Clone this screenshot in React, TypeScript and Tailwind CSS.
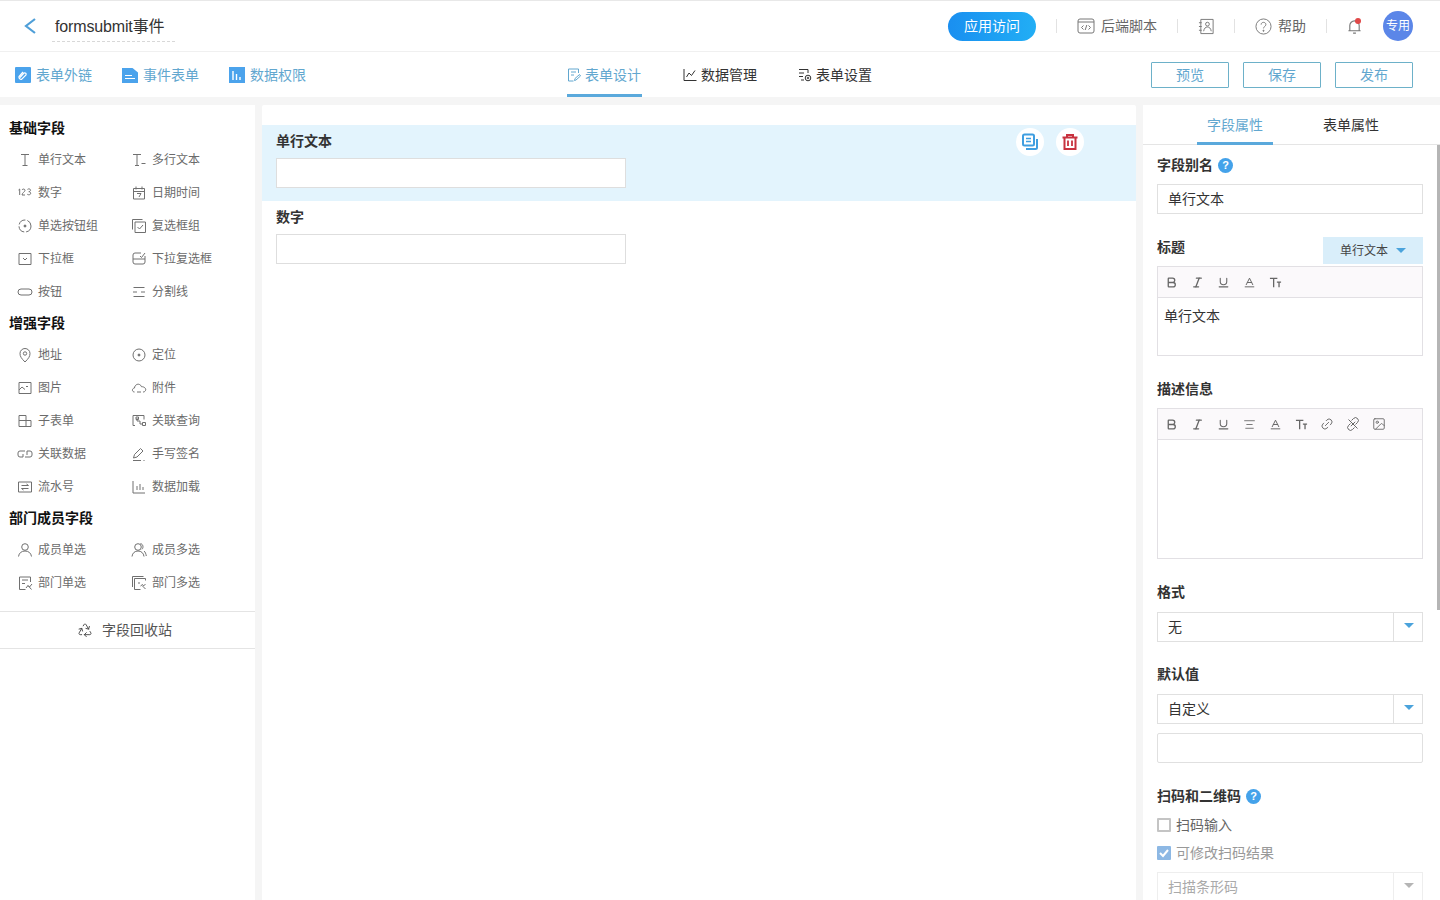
import React from "react";
import { Bold, Italic, Underline, AlignCenter, Baseline, Link2, Image as ImageIcon, Recycle } from "lucide-react";

const glyphs: Record<string, React.ReactNode> = {
  text: <path d="M4 2.500h8M8 2.500v11M5.500 13.500h5" />,
  textarea: <path d="M2 2.500h8M6 2.500v11M4 13.500h4M10.500 11.500h4" />,
  number: (
    <>
      <path d="M1.500 5l1.200-1v6" />
      <path d="M5 5c.5-1.400 3-1.200 3 .3 0 1.400-3 2.700-3 4.700h3" />
      <path d="M10.500 4.400c1-.9 3-.6 3 .8 0 1-1 1.400-1.700 1.500.9 0 1.900.5 1.900 1.600 0 1.500-2.200 1.900-3.400 1" />
    </>
  ),
  date: <path d="M2.500 3.500h11v10.500h-11zM2.500 6.500h11M5 1.500v3M11 1.500v3M6 8.500h4L8 12" />,
  radio: (
    <>
      <circle cx="8" cy="8" r="6" strokeDasharray="8 2" />
      <circle cx="8" cy="8" r="1" fill="currentColor" />
    </>
  ),
  checkbox: <path d="M1.500 11.500v-10h10M4 4h10.500v10.500H4zM6.500 9l2 2 3.500-4" />,
  select: <path d="M2 2.500h12v11H2zM6 7l2 2 2-2" />,
  multiselect: <path d="M14 5v3H2V4a2 2 0 0 1 2-2h6M2 8v3a2 2 0 0 0 2 2h8a2 2 0 0 0 2-2V8M9 5l1.500 1.500L14 2" />,
  button: <rect x="1" y="5" width="14" height="6" rx="3" />,
  divider: <path d="M2.500 3.500h11M2 8h4M10 8h4M2.500 12.500h11" />,
  address: (
    <>
      <path d="M8 15C4.500 11.500 3 9.500 3 6.500a5 5 0 0 1 10 0c0 3-1.500 5-5 8.500z" />
      <circle cx="8" cy="6.500" r="1.700" />
    </>
  ),
  locate: (
    <>
      <circle cx="8" cy="8" r="6" />
      <circle cx="8" cy="8" r="1" fill="currentColor" />
    </>
  ),
  picture: <path d="M2 2.500h12v11H2zM2 10l3-3 3 2.500M9 6.500h2" />,
  attachment: <path d="M3.500 12C1 12 .5 8.500 3.500 8c.2-2.800 2.800-4.500 5-3.500 1 .4 1.700 1.200 2 2.200C13 6.500 15.500 8.500 14.500 10.500c-.4.900-1.200 1.500-2.500 1.500M6 12h4" />,
  subform: <path d="M2 2.500h7v11H2zM9 7.500h5v6H9M2 7.500h7" />,
  query: <path d="M2 12.500v-10h11v4M2 12.500h2M6 5v3h3v3h2.500M11.500 9.500h3v3h-3zM5 4h2.500v2.500H5z" />,
  relation: <path d="M8 5H3a2 2 0 0 0-2 2v2a2 2 0 0 0 2 2h3V8M8 11h5a2 2 0 0 0 2-2V7a2 2 0 0 0-2-2h-3v4" />,
  signature: <path d="M2.500 12l1-3.500 6-6 2.500 2.500-6 6zM2 14.500h8M12.500 14.500h1" />,
  serial: <path d="M1.500 3h13v10h-13zM4.500 6.500h7M9.500 5l2 1.500M4.500 9.500h7M4.500 9.500l2 1.500" />,
  chart: <path d="M2 2v12h12M6 11V7M9 11V5M12 11V8" />,
  user: (
    <>
      <circle cx="8" cy="5" r="3.300" />
      <path d="M1.500 14.500c.5-3.500 3-5.500 6.500-5.500s6 2 6.500 5.500" />
    </>
  ),
  users: (
    <>
      <circle cx="7" cy="5" r="3.300" />
      <path d="M1 14.500c.4-3.500 2.800-5.500 6-5.500s5.600 2 6 5.500M9.500 1.500c2.500.5 3.300 4 1.500 5.800M13 9c1.300 1 2 3 2.300 5" />
    </>
  ),
  dept: <path d="M13.500 7V2H2.500v12.500h6M5 5h6M5 8.500h3M9 13l2-2.500 1.500 1.500L15 9M11 10.500l3.500 4" />,
  depts: <path d="M1.500 12V1.500h11M3.500 3.500h11v2M3.500 3.500v11h6M7 8h2M9.500 11l2-1.500 1 1.500 2-2M11.500 11l3 3" />,
};

function FieldIcon({ name }: { name: string }) {
  return (
    <svg viewBox="0 0 16 16" className="w-4 h-4 shrink-0 text-[#707070]" fill="none" stroke="currentColor" strokeWidth="1">
      {glyphs[name]}
    </svg>
  );
}

const sections = [
  {
    title: "基础字段",
    items: [
      ["text", "单行文本"],
      ["textarea", "多行文本"],
      ["number", "数字"],
      ["date", "日期时间"],
      ["radio", "单选按钮组"],
      ["checkbox", "复选框组"],
      ["select", "下拉框"],
      ["multiselect", "下拉复选框"],
      ["button", "按钮"],
      ["divider", "分割线"],
    ],
  },
  {
    title: "增强字段",
    items: [
      ["address", "地址"],
      ["locate", "定位"],
      ["picture", "图片"],
      ["attachment", "附件"],
      ["subform", "子表单"],
      ["query", "关联查询"],
      ["relation", "关联数据"],
      ["signature", "手写签名"],
      ["serial", "流水号"],
      ["chart", "数据加载"],
    ],
  },
  {
    title: "部门成员字段",
    items: [
      ["user", "成员单选"],
      ["users", "成员多选"],
      ["dept", "部门单选"],
      ["depts", "部门多选"],
    ],
  },
];

function Sidebar() {
  return (
    <aside className="w-[255px] shrink-0 bg-white pt-[13px]">
      {sections.map((s) => (
        <div key={s.title} className="mb-[5px]">
          <h3 className="h-5 leading-5 pl-[9px] mb-[5px] text-sm font-bold text-[#111]">{s.title}</h3>
          <div className="grid grid-cols-[114px_114px] pl-[17px]">
            {s.items.map(([icon, label]) => (
              <div key={label} className="h-[33px] flex items-center gap-[5px] text-xs text-[#6b6b6b]">
                <FieldIcon name={icon} />
                <span>{label}</span>
              </div>
            ))}
          </div>
        </div>
      ))}
      <div className="mt-3 h-[38px] pr-[6px] border-y border-[#e4e4e4] flex items-center justify-center gap-[9px] text-sm text-[#555]">
        <Recycle className="w-4 h-4 text-[#444]" strokeWidth={1.4} />
        <span>字段回收站</span>
      </div>
    </aside>
  );
}

function CanvasField({ label, active }: { label: string; active?: boolean }) {
  return (
    <div className={`relative h-[76px] pt-2 px-[14px] ${active ? "bg-[#e3f4fd]" : ""}`}>
      <div className="h-[17px] leading-[17px] text-sm font-bold text-[#333]">{label}</div>
      <div className="mt-2 w-[350px] h-[30px] bg-white border border-[#dedede]" />
      {active && (
        <div className="absolute top-[3px] left-[754px] flex gap-3">
          <span className="w-7 h-7 rounded-full bg-white flex items-center justify-center">
            <svg viewBox="0 0 18 18" className="w-[18px] h-[18px]" fill="none" stroke="#3f9ee0" strokeWidth="2">
              <rect x="2" y="1.500" width="11" height="11" rx="1.500" />
              <path d="M5 5.500h5M5 8.500h5" strokeWidth="1.500" />
              <path d="M16 6v8.500a1.500 1.500 0 0 1-1.500 1.500H5" />
            </svg>
          </span>
          <span className="w-7 h-7 rounded-full bg-white flex items-center justify-center">
            <svg viewBox="0 0 18 18" className="w-[18px] h-[18px]" fill="none" stroke="#c8323f" strokeWidth="2">
              <path d="M1.500 4.500h15M6 4.500V2h6v2.500M3.500 4.500V16h11V4.500" />
              <path d="M7 7.500v5.500M11 7.500v5.500" strokeWidth="1.800" />
            </svg>
          </span>
        </div>
      )}
    </div>
  );
}

function HelpDot() {
  return (
    <span className="w-[15px] h-[15px] rounded-full bg-[#44a2ea] text-white text-[11px] font-bold leading-[15px] text-center">?</span>
  );
}

function Caret({ color = "border-t-[#4ba3dc]" }: { color?: string }) {
  return <span className={`w-0 h-0 border-x-[5px] border-x-transparent border-t-[5px] ${color}`} />;
}

function Select({ value, disabled }: { value: string; disabled?: boolean }) {
  return (
    <div className={`h-[30px] flex border text-sm ${disabled ? "border-[#eeeeee] text-[#aaa]" : "border-[#e0e0e0] text-[#333]"}`}>
      <div className="flex-1 pl-[10px] leading-[28px]">{value}</div>
      <div className={`w-[29px] pl-px pb-[3px] border-l flex items-center justify-center ${disabled ? "border-[#eeeeee]" : "border-[#e0e0e0]"}`}>
        <Caret color={disabled ? "border-t-[#b5b5b5]" : "border-t-[#4ba3dc]"} />
      </div>
    </div>
  );
}

function TextSizeIcon() {
  return (
    <svg viewBox="0 0 14 14" className="w-[13px] h-[13px]" fill="none" stroke="currentColor" strokeWidth="1.400">
      <path d="M1 2.500h8M5 2.500V12M8.500 6.500h4.500M10.800 6.500V12" />
    </svg>
  );
}

function UnlinkIcon() {
  return (
    <svg viewBox="0 0 14 14" className="w-[14px] h-[14px]" fill="none" stroke="currentColor" strokeWidth="1">
      <path d="M5.500 3.500l2-2a2.800 2.800 0 0 1 4 4l-2 2M8.500 10.500l-2 2a2.800 2.800 0 0 1-4-4l2-2M4.800 9.200l4.400-4.400M2.500 2.500l9 9" />
    </svg>
  );
}

function Editor({ tools, height, children }: { tools: React.ReactNode[]; height: string; children?: React.ReactNode }) {
  return (
    <div className={`border border-[#e2e0e4] ${height}`}>
      <div className="h-[31px] bg-[#fbf9fb] border-b border-[#e2e0e4] flex items-center text-[#666]">
        {tools.map((t, i) => (
          <span key={i} className="w-[26px] flex items-center justify-center">{t}</span>
        ))}
      </div>
      {children}
    </div>
  );
}

const ic = "w-[13px] h-[13px]";
const titleTools = [
  <Bold className={ic} strokeWidth={2.4} />,
  <Italic className={ic} strokeWidth={2.4} />,
  <Underline className={ic} strokeWidth={2} />,
  <Baseline className={ic} strokeWidth={1.8} />,
  <TextSizeIcon />,
];
const descTools = [
  <Bold className={ic} strokeWidth={2.4} />,
  <Italic className={ic} strokeWidth={2.4} />,
  <Underline className={ic} strokeWidth={2} />,
  <AlignCenter className={ic} strokeWidth={1.6} />,
  <Baseline className={ic} strokeWidth={1.8} />,
  <TextSizeIcon />,
  <Link2 className="w-[14px] h-[14px] -rotate-45" strokeWidth={1.5} />,
  <UnlinkIcon />,
  <ImageIcon className="w-[14px] h-[14px]" strokeWidth={1.5} />,
];

function Label({ children, className = "" }: { children: React.ReactNode; className?: string }) {
  return <div className={`h-5 leading-5 text-sm font-bold text-[#333] flex items-center gap-[5px] ${className}`}>{children}</div>;
}

function PropsPanel() {
  return (
    <aside className="relative w-[297px] shrink-0 bg-white overflow-hidden">
      <div className="h-10 flex pl-[54px] gap-10 border-b border-[#e5e5e5] text-sm">
        <div className="h-10 w-[76px] text-center leading-[40px] text-[#62a7cf] border-b-[3px] border-[#5aa9dc]">字段属性</div>
        <div className="h-10 w-[76px] text-center leading-[40px] text-[#333]">表单属性</div>
      </div>
      <div className="absolute right-0 top-10 w-[3px] h-[465px] bg-[#b5b5b5]" />
      <div className="pl-[14px] pr-[17px]">
        <Label className="mt-[10px]">字段别名 <HelpDot /></Label>
        <div className="mt-[9px] h-[30px] border border-[#e0e0e0] pl-[10px] leading-[28px] text-sm text-[#333]">单行文本</div>

        <div className="mt-[23px] h-[27px] flex items-start justify-between">
          <Label>标题</Label>
          <div className="w-[100px] h-[27px] bg-[#d9eefa] flex items-center justify-center gap-2 text-xs text-[#444]">
            单行文本 <Caret />
          </div>
        </div>
        <div className="mt-[2px]">
          <Editor tools={titleTools} height="h-[90px]">
            <div className="pl-[6px] pt-2 text-sm leading-5 text-[#333]">单行文本</div>
          </Editor>
        </div>

        <Label className="mt-[23px]">描述信息</Label>
        <div className="mt-[9px]">
          <Editor tools={descTools} height="h-[151px]" />
        </div>

        <Label className="mt-[23px]">格式</Label>
        <div className="mt-[10px]"><Select value="无" /></div>

        <Label className="mt-[22px]">默认值</Label>
        <div className="mt-[10px]"><Select value="自定义" /></div>
        <div className="mt-[9px] h-[30px] border border-[#e0e0e0] rounded-[2px]" />

        <Label className="mt-[23px]">扫码和二维码 <HelpDot /></Label>
        <div className="mt-[9px] h-5 flex items-center gap-[5px] text-sm text-[#666]">
          <span className="w-[14px] h-[14px] border-2 border-[#c4c4c4] rounded-[1px]" />
          扫码输入
        </div>
        <div className="mt-2 h-5 flex items-center gap-[5px] text-sm text-[#999]">
          <span className="w-[14px] h-[14px] bg-[#8db8e4] rounded-[1px] flex items-center justify-center">
            <svg viewBox="0 0 14 14" className="w-[14px] h-[14px]" fill="none" stroke="#fff" strokeWidth="2">
              <path d="M3 7l3 3 5-6" />
            </svg>
          </span>
          可修改扫码结果
        </div>
        <div className="mt-[9px]"><Select value="扫描条形码" disabled /></div>
      </div>
    </aside>
  );
}

function TopBar() {
  const sep = "w-px h-[14px] bg-[#e2e2e2]";
  return (
    <div className="h-[52px] border-t border-b border-t-[#e8e8e8] border-b-[#f0f0f0] bg-white flex items-center pr-[27px]">
      <svg viewBox="0 0 12 16" className="ml-6 w-3 h-4" fill="none" stroke="#4f9fd8" strokeWidth="2.200">
        <path d="M11 1L2 8l9 7" />
      </svg>
      <div className="ml-[16px] mt-2 h-6 pl-[3px] w-[123px] border-b border-dashed border-[#d8d8d8] text-base leading-[18px] tracking-[-0.15px] text-[#333]">formsubmit事件</div>
      <div className="ml-auto flex items-center text-sm text-[#666]">
        <div className="w-[88px] h-[29px] rounded-full bg-gradient-to-r from-[#1a8ff0] to-[#22aef5] text-white text-center leading-[29px]">应用访问</div>
        <span className={`${sep} ml-5`} />
        <svg viewBox="0 0 18 18" className="ml-5 w-[18px] h-[18px]" fill="none" stroke="#777" strokeWidth="1">
          <rect x="1" y="2" width="16" height="14" rx="2" />
          <path d="M1 5h16M6.500 8.500l-2 2 2 2M11.500 8.500l2 2-2 2M9.800 8l-1.600 5" />
        </svg>
        <span className="ml-[6px]">后端脚本</span>
        <span className={`${sep} ml-5`} />
        <svg viewBox="0 0 18 18" className="ml-5 w-[17px] h-[17px]" fill="none" stroke="#777" strokeWidth="1">
          <path d="M3 1.500h13v15H3zM1 5h3M1 9h3M1 13h3" />
          <circle cx="10" cy="6.500" r="2" />
          <path d="M6 14c.4-3 2-4.500 4-4.500s3.600 1.500 4 4.500" />
        </svg>
        <span className={`${sep} ml-[19px]`} />
        <svg viewBox="0 0 18 18" className="ml-5 w-[17px] h-[17px]" fill="none" stroke="#777" strokeWidth="1">
          <circle cx="9" cy="9" r="8" />
          <path d="M6.500 7c0-3.200 5-3.200 5 0 0 2-2.500 2-2.500 4" />
          <circle cx="9" cy="13.500" r=".6" fill="#777" />
        </svg>
        <span className="ml-[6px]">帮助</span>
        <span className={`${sep} ml-5`} />
        <span className="relative ml-5 w-[15px] h-[17px]">
          <svg viewBox="0 0 16 18" className="w-[15px] h-[17px]" fill="none" stroke="#777" strokeWidth="1.200">
            <path d="M3 13.500V8a5 5 0 0 1 10 0v5.500M1.500 13.500h13M6.500 16h3" />
          </svg>
          <span className="absolute top-0 right-[1px] w-[6px] h-[6px] rounded-full bg-[#e04848]" />
        </span>
        <div className="ml-[21px] w-[30px] h-[30px] rounded-full bg-[#5b86e8] text-white text-xs text-center leading-[30px]">专用</div>
      </div>
    </div>
  );
}

function SquareIcon({ children }: { children: React.ReactNode }) {
  return (
    <svg viewBox="0 0 16 16" className="w-4 h-4 shrink-0">
      {children}
    </svg>
  );
}

function NavBar() {
  const leftLinks = [
    {
      label: "表单外链",
      icon: (
        <>
          <rect width="16" height="16" rx="1" fill="#4ba3ec" />
          <path d="M5 10.500l4-4.500a1.500 1.500 0 0 1 2 2l-4.500 4.500a2.500 2.500 0 0 1-2.500-3L8 5" fill="none" stroke="#fff" strokeWidth="1.200" />
        </>
      ),
    },
    {
      label: "事件表单",
      icon: (
        <>
          <path d="M0 1h10.500L16 5.500V16H0z" fill="#4ba3ec" />
          <path d="M3 8.500h7M3 11.500h10" stroke="#fff" strokeWidth="1.200" />
        </>
      ),
    },
    {
      label: "数据权限",
      icon: (
        <>
          <rect width="16" height="16" fill="#4ba3ec" />
          <path d="M4 4v9M7.500 7v6M11 10v3" stroke="#fff" strokeWidth="1.400" />
        </>
      ),
    },
  ];
  const tabIcon = "w-[14px] h-[14px] shrink-0";
  return (
    <div className="h-[45px] bg-white flex items-center pl-[15px] pr-[27px]">
      <div className="flex items-center gap-[30px]">
        {leftLinks.map((l) => (
          <div key={l.label} className="flex items-center gap-[5px] text-sm text-[#62a7cf]">
            <SquareIcon>{l.icon}</SquareIcon>
            {l.label}
          </div>
        ))}
      </div>
      <div className="ml-[261px] flex items-center gap-[41px] text-sm text-[#333] self-stretch">
        <div className="h-[45px] pt-[3px] pr-px flex items-center gap-1 text-[#62a7cf] border-b-[3px] border-[#5aa9dc]">
          <svg viewBox="0 0 14 14" className={tabIcon} fill="none" stroke="currentColor" strokeWidth="1">
            <path d="M11.500 5V1H1.500v12h5M4 4h5M4 7h3M7.500 12.500l.5-2 4.500-4 1 1.500-4.500 4z" />
          </svg>
          表单设计
        </div>
        <div className="flex items-center gap-1">
          <svg viewBox="0 0 14 14" className={tabIcon} fill="none" stroke="currentColor" strokeWidth="1">
            <path d="M1 1v11.500h12.500M3.500 9l2.500-4 2.500 2.500 3.500-5" />
          </svg>
          数据管理
        </div>
        <div className="flex items-center gap-1">
          <svg viewBox="0 0 14 14" className={tabIcon} fill="none" stroke="currentColor" strokeWidth="1">
            <path d="M1 1.500h9V5M1 5h5M1 8.500h4M3 12h3" />
            <circle cx="10" cy="10" r="2.800" />
            <circle cx="10" cy="10" r=".8" />
          </svg>
          表单设置
        </div>
      </div>
      <div className="ml-auto flex gap-[14px]">
        {["预览", "保存", "发布"].map((b) => (
          <div key={b} className="w-[78px] h-[26px] border border-[#6db1c9] rounded-[1px] text-center leading-[24px] text-sm text-[#62a7cf]">{b}</div>
        ))}
      </div>
    </div>
  );
}

export default function App() {
  return (
    <div className="h-screen overflow-hidden bg-[#f5f5f5] font-['Liberation_Sans','Noto_Sans_CJK_SC',sans-serif]">
      <TopBar />
      <NavBar />
      <div className="mt-2 flex justify-between h-[795px]">
        <Sidebar />
        <main className="w-[874px] bg-white pt-5 rounded-t-[2px]">
          <CanvasField label="单行文本" active />
          <CanvasField label="数字" />
        </main>
        <PropsPanel />
      </div>
    </div>
  );
}
